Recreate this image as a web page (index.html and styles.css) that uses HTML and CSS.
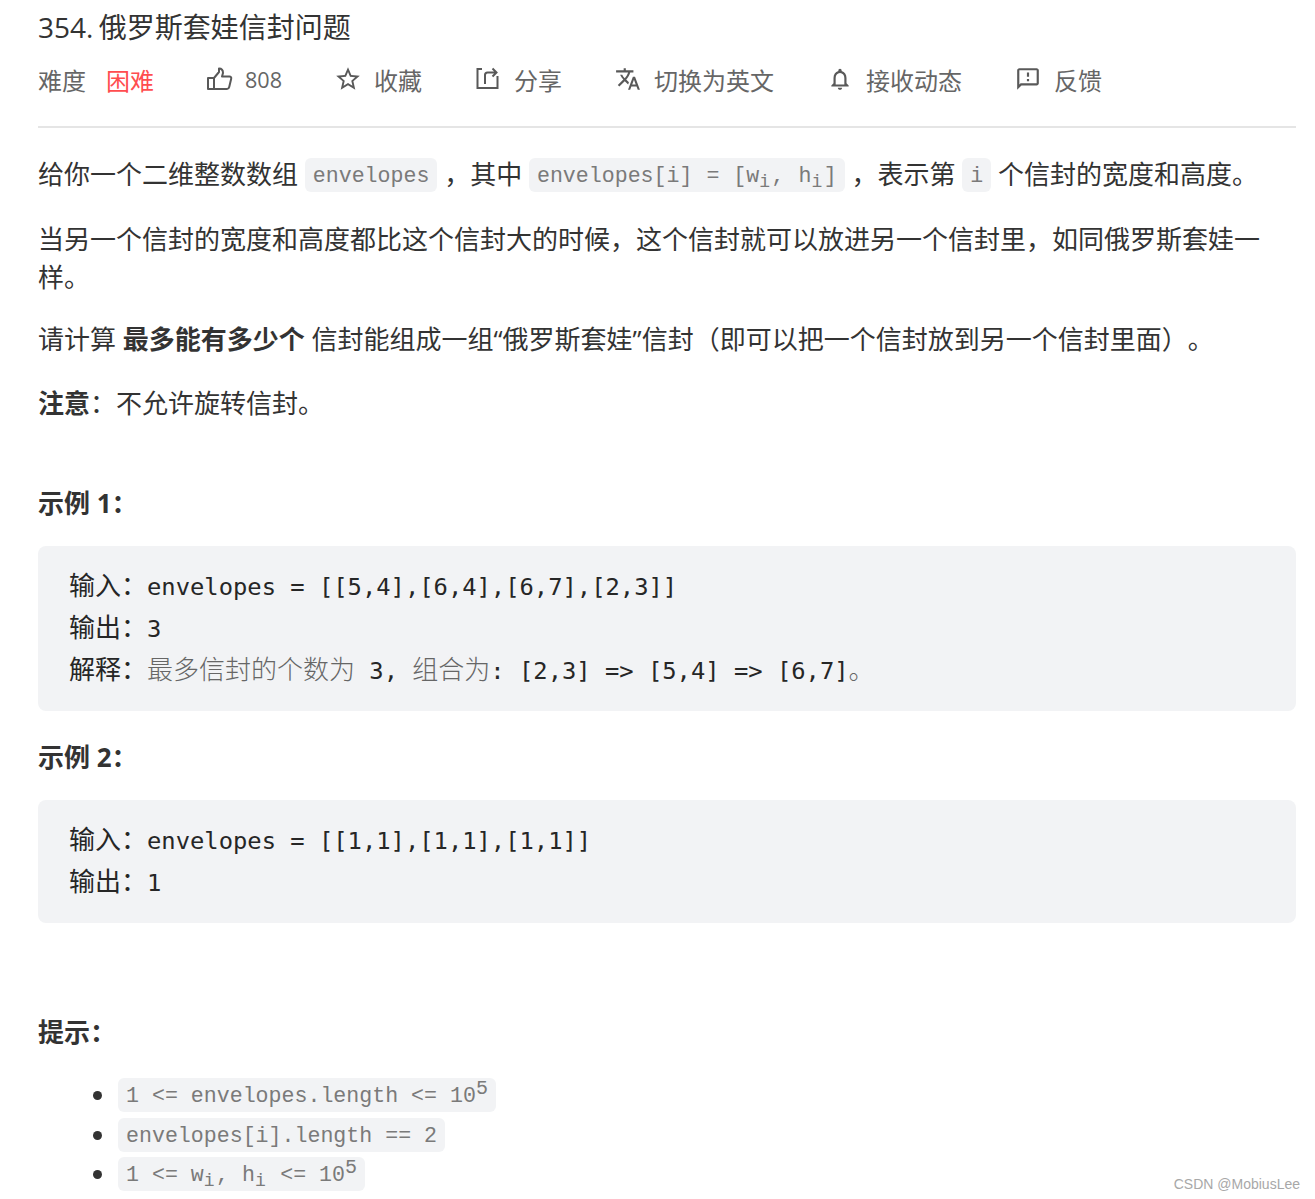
FILE: index.html
```html
<!DOCTYPE html>
<html lang="zh-CN">
<head>
    <meta charset="UTF-8">
    <title>354. 俄罗斯套娃信封问题</title>
    <link rel="stylesheet" href="styles.css">
</head>
<body>
    <div class="page">
        <h1 class="title">354. 俄罗斯套娃信封问题</h1>
        <div class="toolbar">
            <div class="difficulty"><span>难度</span><span class="hard">困难</span></div>
            <div class="tool">
                <svg class="icon" viewBox="0 0 26 26"><path d="M1 12h6v11H1zM7 12l5-6V2.500c2.800 0 4 2 4 4.500l-1 3.500h7.500c1.200 0 2 1 1.700 2.200l-2 8.300c-.3 1.200-1 2-2.200 2H7" fill="none" stroke="currentColor" stroke-width="2" stroke-linejoin="round"/></svg>
                <span class="count">808</span>
            </div>
            <div class="tool">
                <svg class="icon" viewBox="1 1 22 22"><path fill="currentColor" d="M22 9.240l-7.190-.62L12 2 9.190 8.630 2 9.240l5.460 4.730L5.820 21 12 17.270 18.180 21l-1.630-7.030L22 9.240zM12 15.400l-3.760 2.270 1-4.280-3.320-2.880 4.380-.38L12 6.100l1.710 4.040 4.380.38-3.320 2.880 1 4.280L12 15.400z"/></svg>
                <span>收藏</span>
            </div>
            <div class="tool">
                <svg class="icon" viewBox="0 0 26 26"><path d="M7 3H2.500v19h20V10M10 18v-9c0-1.500 1-2.500 2.500-2.500H21M17.500 2.500l4 4-4 4" fill="none" stroke="currentColor" stroke-width="2"/></svg>
                <span>分享</span>
            </div>
            <div class="tool">
                <svg class="icon" viewBox="0 0 24 24"><path fill="currentColor" d="M12.870 15.070l-2.540-2.510.03-.03c1.740-1.940 2.980-4.170 3.710-6.530H17V4h-7V2H8v2H1v1.990h11.170C11.500 7.920 10.440 9.750 9 11.350 8.070 10.320 7.300 9.190 6.690 8h-2c.73 1.630 1.730 3.170 2.980 4.560l-5.090 5.020L4 19l5-5 3.110 3.110.76-2.040zM18.500 10h-2L12 22h2l1.120-3h4.750L21 22h2l-4.500-12zm-2.620 7l1.620-4.330L19.120 17h-3.240z"/></svg>
                <span>切换为英文</span>
            </div>
            <div class="tool">
                <svg class="icon" viewBox="0 0 24 24"><path fill="currentColor" d="M12 22c1.100 0 2-.9 2-2h-4c0 1.100.9 2 2 2zm6-6v-5c0-3.070-1.630-5.640-4.500-6.320V4c0-.83-.67-1.500-1.500-1.500s-1.500.67-1.500 1.500v.68C7.640 5.360 6 7.920 6 11v5l-2 2v1h16v-1l-2-2zm-2 1H8v-6c0-2.480 1.510-4.500 4-4.500s4 2.020 4 4.500v6z"/></svg>
                <span>接收动态</span>
            </div>
            <div class="tool">
                <svg class="icon" viewBox="0 0 24 24"><path fill="currentColor" d="M20 2H4c-1.100 0-2 .9-2 2v18l4-4h14c1.100 0 2-.9 2-2V4c0-1.100-.9-2-2-2zm0 14H5.170L4 17.170V4h16v12zM11 12h2v2h-2zm0-6h2v4h-2z"/></svg>
                <span>反馈</span>
            </div>
        </div>

        <div class="content">
            <p class="intro">给你一个二维整数数组 <code>envelopes</code> ，其中 <code class="pair">envelopes[i] = [w<sub>i</sub>, h<sub>i</sub>]</code> ，表示第 <code>i</code> 个信封的宽度和高度。</p>
            <p class="wrapped">当另一个信封的宽度和高度都比这个信封大的时候，这个信封就可以放进另一个信封里，如同俄罗斯套娃一样。</p>
            <p>请计算 <strong>最多能有多少个</strong> 信封能组成一组“俄罗斯套娃”信封（即可以把一个信封放到另一个信封里面）。</p>
            <p><strong>注意</strong>：不允许旋转信封。</p>

            <h2 class="example-title first">示例 1：</h2>
            <pre class="example"><b>输入：</b>envelopes = [[5,4],[6,4],[6,7],[2,3]]
<b>输出：</b>3
<b>解释：</b><i>最多信封的个数为</i> 3, <i>组合为</i>: [2,3] =&gt; [5,4] =&gt; [6,7]<i>。</i></pre>

            <h2 class="example-title">示例 2：</h2>
            <pre class="example"><b>输入：</b>envelopes = [[1,1],[1,1],[1,1]]
<b>输出：</b>1</pre>

            <h2 class="hint-title">提示：</h2>
            <ul class="hints">
                <li><code>1 &lt;= envelopes.length &lt;= 10<sup>5</sup></code></li>
                <li><code>envelopes[i].length == 2</code></li>
                <li><code>1 &lt;= w<sub>i</sub>, h<sub>i</sub> &lt;= 10<sup>5</sup></code></li>
            </ul>
        </div>
    </div>
    <div class="watermark">CSDN @MobiusLee</div>
</body>
</html>
```

FILE: styles.css
```css
html, body {
    margin: 0;
    padding: 0;
    background: #ffffff;
}

body {
    font-family: "Open Sans", "Noto Sans CJK SC", sans-serif;
    color: #333333;
    height: 1199px;
    overflow: hidden;
    position: relative;
    text-spacing-trim: space-all;
}

.page {
    padding: 0 19px 0 38px;
}

.title {
    margin: 0;
    font-size: 28px;
    font-weight: 400;
    line-height: 54px;
    word-spacing: -2px;
    color: #333333;
}

.toolbar {
    display: flex;
    align-items: center;
    gap: 53px;
    height: 50px;
    font-size: 24px;
    color: #666666;
    padding-bottom: 22px;
    border-bottom: 2px solid #e5e5e5;
}

.difficulty {
    display: flex;
    gap: 20px;
}

.hard {
    color: #ff4d4f;
}

.tool {
    display: flex;
    align-items: center;
    gap: 13px;
}

.count {
    font-size: 21.600px;
    margin-left: -1px;
}

.icon {
    width: 26px;
    height: 26px;
    color: #595959;
}

.content {
    font-size: 26px;
    line-height: 38px;
    padding-top: 27px;
}

.content p {
    margin: 0 0 26px;
}

.content p.intro {
    margin-bottom: 27px;
}

.content p.wrapped {
    margin-bottom: 24px;
}

code {
    font-family: "Liberation Mono", "Noto Sans CJK SC", monospace;
    font-size: 21.6px;
    line-height: 1;
    color: #7a7a7a;
    background: #f2f3f5;
    border-radius: 6px;
    padding: 6px 8px 4px;
    vertical-align: 2px;
}

code.pair {
    word-spacing: 1px;
}

sub {
    font-size: 18px;
    line-height: 0;
    letter-spacing: 1.500px;
}

sup {
    font-size: 20px;
    line-height: 0;
}

.example-title, .hint-title {
    margin: 0;
    font-size: 26px;
    font-weight: 700;
    line-height: 38px;
}

.example-title.first {
    margin-top: 62px;
}

.example {
    margin: 24px 0 27px;
    padding: 20px 31px 19px;
    background: #f2f3f5;
    border-radius: 8px;
    font-family: "DejaVu Sans Mono", "Noto Sans CJK SC", monospace;
    font-size: 23.8px;
    line-height: 41px;
    color: #262626;
}

.example b {
    font-size: 26px;
    font-weight: 400;
}

.example i {
    font-size: 26px;
    font-style: normal;
    font-weight: 300;
    color: #666666;
}

.hint-title {
    margin-top: 90px;
}

.hints {
    margin: 24px 0 0;
    padding-left: 80px;
}

.hints li {
    height: 39.500px;
}

.watermark {
    position: absolute;
    right: 15px;
    bottom: 7px;
    font-family: "Liberation Sans", sans-serif;
    font-size: 14px;
    color: #a8a8a8;
}
```
